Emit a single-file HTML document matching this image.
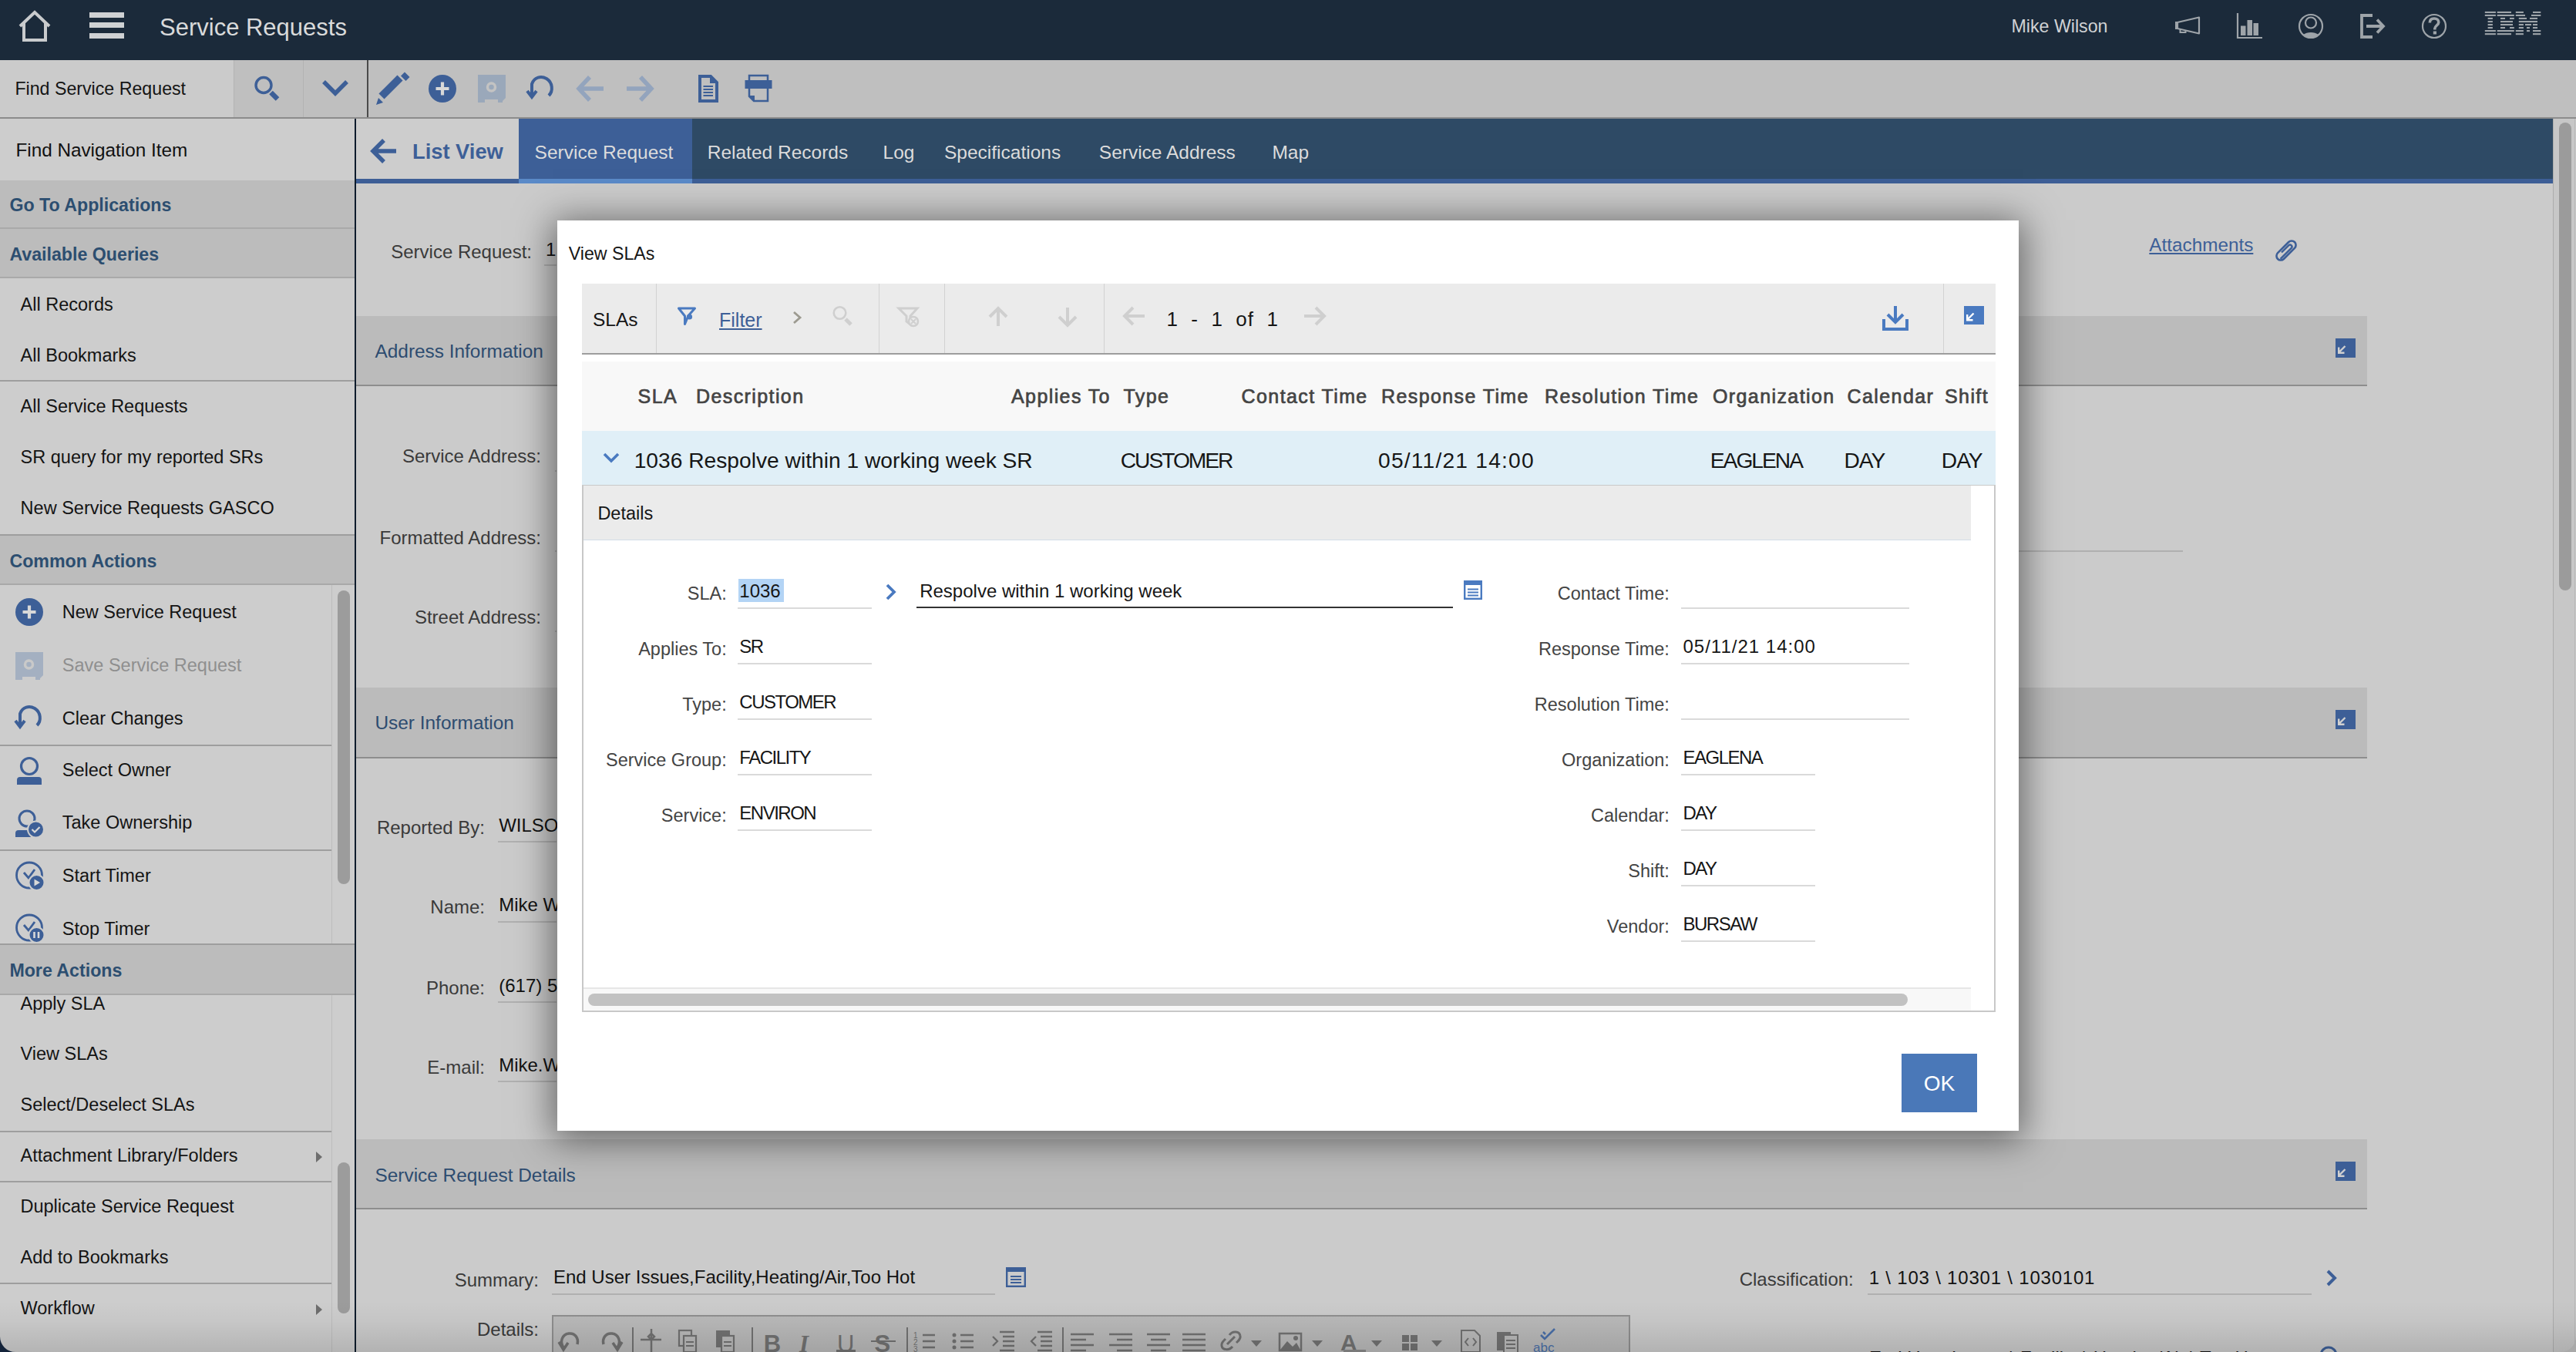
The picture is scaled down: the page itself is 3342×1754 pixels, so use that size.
<!DOCTYPE html>
<html><head><meta charset="utf-8"><title>Service Requests</title>
<style>
html,body{margin:0;padding:0;}
body{width:3342px;height:1754px;position:relative;overflow:hidden;background:#cbcbcb;font-family:"Liberation Sans",sans-serif;}
.r{position:absolute;display:block;}
.t{position:absolute;white-space:nowrap;line-height:1;}
svg.r{overflow:visible;}
</style></head><body>
<div class="r" style="left:0px;top:0px;width:3342px;height:78px;background:#1b2a3a;"></div>
<svg class="r" style="left:22px;top:12px;" width="46" height="44" viewBox="0 0 46 44"><path d="M4 22 L23 4 L42 22 M9 18 V40 H37 V18" fill="none" stroke="#c9cbcd" stroke-width="4" stroke-linejoin="miter"/></svg>
<div class="r" style="left:116px;top:15.5px;width:45px;height:7.0px;background:#cfd1d3;"></div>
<div class="r" style="left:116px;top:29px;width:45px;height:7px;background:#cfd1d3;"></div>
<div class="r" style="left:116px;top:43px;width:45px;height:7px;background:#cfd1d3;"></div>
<div class="t " style="top:20.4px;font-size:31px;color:#d9dadb;left:207.0px;letter-spacing:0px;">Service Requests</div>
<div class="t " style="top:23.4px;font-size:23.2px;color:#d0d2d4;left:2609.5px;">Mike Wilson</div>
<svg class="r" style="left:2820px;top:18px;" width="38" height="30" viewBox="0 0 38 30"><path d="M5 11 L33 4.5 V25.5 L5 19 Z" fill="none" stroke="#9ea4a9" stroke-width="2.2" stroke-linejoin="round"/><rect x="2" y="10" width="3.5" height="10" fill="#9ea4a9"/><path d="M8.5 20 V24 H15.5 V22" fill="none" stroke="#9ea4a9" stroke-width="2"/></svg>
<svg class="r" style="left:2900px;top:16px;" width="36" height="36" viewBox="0 0 36 36"><path d="M3 1 V33 H35" fill="none" stroke="#9ea4a9" stroke-width="2.2"/><rect x="7" y="17.5" width="6.5" height="12.5" fill="#9ea4a9"/><rect x="15.5" y="10" width="6.5" height="20" fill="#9ea4a9"/><rect x="23.5" y="14" width="6.5" height="16" fill="#9ea4a9"/></svg>
<svg class="r" style="left:2980px;top:16px;" width="36" height="36" viewBox="0 0 36 36"><defs><clipPath id="uc"><circle cx="18" cy="18" r="15"/></clipPath></defs><circle cx="18" cy="18" r="15" fill="none" stroke="#9ea4a9" stroke-width="2.2"/><circle cx="18" cy="13.5" r="7" fill="none" stroke="#9ea4a9" stroke-width="2.2"/><ellipse cx="18" cy="36" rx="14" ry="10" fill="#9ea4a9" clip-path="url(#uc)"/></svg>
<svg class="r" style="left:3060px;top:16px;" width="36" height="36" viewBox="0 0 36 36"><path d="M18 4 H4 V32 H18" fill="none" stroke="#9ea4a9" stroke-width="3.8"/><path d="M10 18 H32 M24 9.5 L32 18 L24 26.5" fill="none" stroke="#9ea4a9" stroke-width="3.8"/></svg>
<svg class="r" style="left:3140px;top:16px;" width="36" height="36" viewBox="0 0 36 36"><circle cx="18" cy="18" r="15" fill="none" stroke="#9ea4a9" stroke-width="2.2"/><path d="M12.3 13.5 C12.3 9.5 14.8 8 18 8 C21.5 8 23.8 10 23.8 13 C23.8 16.5 18.8 17.5 18.8 21 V22.5" fill="none" stroke="#9ea4a9" stroke-width="3.6"/><rect x="16.8" y="24.5" width="4.2" height="4" fill="#9ea4a9"/></svg>
<svg class="r" style="left:3222px;top:13px;" width="78" height="34" viewBox="0 0 78 34"><rect x="1.8" y="1.9" width="14.1" height="2.1" fill="#9ea4a9"/><rect x="17.7" y="1.9" width="18.3" height="2.1" fill="#9ea4a9"/><rect x="41.8" y="1.9" width="10.1" height="2.1" fill="#9ea4a9"/><rect x="64.0" y="1.9" width="10.3" height="2.1" fill="#9ea4a9"/><rect x="1.8" y="5.9" width="14.1" height="2.1" fill="#9ea4a9"/><rect x="17.7" y="5.9" width="22.1" height="2.1" fill="#9ea4a9"/><rect x="41.8" y="5.9" width="12.2" height="2.1" fill="#9ea4a9"/><rect x="62.0" y="5.9" width="12.3" height="2.1" fill="#9ea4a9"/><rect x="5.6" y="9.9" width="6.3" height="2.1" fill="#9ea4a9"/><rect x="22.0" y="9.9" width="6.0" height="2.1" fill="#9ea4a9"/><rect x="34.0" y="9.9" width="5.8" height="2.1" fill="#9ea4a9"/><rect x="45.8" y="9.9" width="10.2" height="2.1" fill="#9ea4a9"/><rect x="60.0" y="9.9" width="10.0" height="2.1" fill="#9ea4a9"/><rect x="5.6" y="14.0" width="6.3" height="2.1" fill="#9ea4a9"/><rect x="22.0" y="14.0" width="16.0" height="2.1" fill="#9ea4a9"/><rect x="45.8" y="14.0" width="24.2" height="2.1" fill="#9ea4a9"/><rect x="5.6" y="18.0" width="6.3" height="2.1" fill="#9ea4a9"/><rect x="22.0" y="18.0" width="16.0" height="2.1" fill="#9ea4a9"/><rect x="45.8" y="18.0" width="6.1" height="2.1" fill="#9ea4a9"/><rect x="54.0" y="18.0" width="8.0" height="2.1" fill="#9ea4a9"/><rect x="64.0" y="18.0" width="6.0" height="2.1" fill="#9ea4a9"/><rect x="5.6" y="22.0" width="6.3" height="2.1" fill="#9ea4a9"/><rect x="22.0" y="22.0" width="6.0" height="2.1" fill="#9ea4a9"/><rect x="34.0" y="22.0" width="5.8" height="2.1" fill="#9ea4a9"/><rect x="45.8" y="22.0" width="6.1" height="2.1" fill="#9ea4a9"/><rect x="56.0" y="22.0" width="4.0" height="2.1" fill="#9ea4a9"/><rect x="64.0" y="22.0" width="6.0" height="2.1" fill="#9ea4a9"/><rect x="1.8" y="26.0" width="14.1" height="2.1" fill="#9ea4a9"/><rect x="17.7" y="26.0" width="22.1" height="2.1" fill="#9ea4a9"/><rect x="41.8" y="26.0" width="10.1" height="2.1" fill="#9ea4a9"/><rect x="56.0" y="26.0" width="4.0" height="2.1" fill="#9ea4a9"/><rect x="64.0" y="26.0" width="10.3" height="2.1" fill="#9ea4a9"/><rect x="1.8" y="30.1" width="14.1" height="2.1" fill="#9ea4a9"/><rect x="17.7" y="30.1" width="18.3" height="2.1" fill="#9ea4a9"/><rect x="41.8" y="30.1" width="10.1" height="2.1" fill="#9ea4a9"/><rect x="64.0" y="30.1" width="10.3" height="2.1" fill="#9ea4a9"/></svg>
<div class="r" style="left:0px;top:78px;width:3342px;height:74px;background:#bfbfbf;"></div>
<div class="r" style="left:0px;top:78px;width:303px;height:74px;background:#cbcbcb;"></div>
<div class="r" style="left:303px;top:78px;width:1px;height:74px;background:#b3b3b3;"></div>
<div class="r" style="left:393px;top:78px;width:1px;height:74px;background:#b3b3b3;"></div>
<div class="r" style="left:476px;top:78px;width:2px;height:74px;background:#4a4a4a;"></div>
<div class="r" style="left:0px;top:152px;width:3342px;height:2px;background:#8c8c8c;"></div>
<div class="t " style="top:103.7px;font-size:23.2px;color:#141414;left:19.4px;">Find Service Request</div>
<svg class="r" style="left:325px;top:94px;" width="40" height="40" viewBox="0 0 40 40"><circle cx="17" cy="16.5" r="10" fill="none" stroke="#3d5f97" stroke-width="3.4"/><path d="M26.5 26 L35 34.5" stroke="#3d5f97" stroke-width="6.5"/></svg>
<svg class="r" style="left:417px;top:102px;" width="36" height="26" viewBox="0 0 36 26"><path d="M3 4 L18 19 L33 4" fill="none" stroke="#3d5f97" stroke-width="5.5"/></svg>
<svg class="r" style="left:486px;top:92px;" width="48" height="46" viewBox="0 0 48 46"><path d="M9 33 L33 9" stroke="#3d5f97" stroke-width="10"/><path d="M36.5 4 L43 10.5" stroke="#3d5f97" stroke-width="7"/><path d="M2 44 L5 35 L11 41 Z" fill="#3d5f97"/></svg>
<svg class="r" style="left:555px;top:96px;" width="38" height="38" viewBox="0 0 38 38"><circle cx="19" cy="19" r="18" fill="#3d5f97"/><path d="M19 10.5 V27.5 M10.5 19 H27.5" stroke="#d8d8d8" stroke-width="4.2"/></svg>
<svg class="r" style="left:619px;top:96px;" width="38" height="38" viewBox="0 0 38 38"><path d="M1 1 H37 V31 L33 35 V37 H27 V33 H10 V37 H1 Z" fill="#9aa8ba"/><circle cx="18.5" cy="17" r="5" fill="none" stroke="#c3c3c3" stroke-width="3.5"/></svg>
<svg class="r" style="left:682px;top:97px;" width="40" height="36" viewBox="0 0 40 36"><path d="M30 27 C36 21 35 10 27 5 C20 1 11 3 8 12 V26" fill="none" stroke="#3d5f97" stroke-width="4"/><path d="M2 21 L8 29 L14 21" fill="none" stroke="#3d5f97" stroke-width="4"/></svg>
<svg class="r" style="left:746px;top:95px;" width="40" height="40" viewBox="0 0 40 40"><path d="M6 20 H37 M19 5 L5 20 L19 35" fill="none" stroke="#93a4bd" stroke-width="5.5"/></svg>
<svg class="r" style="left:810px;top:95px;" width="40" height="40" viewBox="0 0 40 40"><path d="M3 20 H34 M21 5 L35 20 L21 35" fill="none" stroke="#93a4bd" stroke-width="5.5"/></svg>
<svg class="r" style="left:904px;top:95px;" width="30" height="40" viewBox="0 0 30 40"><path d="M4 4 H18 L26 12 V36 H4 Z" fill="none" stroke="#3d5f97" stroke-width="4"/><path d="M17 2 V13 H28 Z" fill="#3d5f97"/><path d="M8.5 17 H21 M8.5 21 H21 M8.5 25 H21 M8.5 29 H21" stroke="#3d5f97" stroke-width="2"/></svg>
<svg class="r" style="left:964px;top:95px;" width="40" height="40" viewBox="0 0 40 40"><rect x="2.5" y="9" width="35" height="11" fill="#3d5f97"/><path d="M8 14 V3 H32 V14" fill="none" stroke="#3d5f97" stroke-width="2.5"/><path d="M8 20 V30 L14 36 H32 V20" fill="none" stroke="#3d5f97" stroke-width="2.5"/><path d="M8 29 H15 V36 Z" fill="#3d5f97"/></svg>
<div class="r" style="left:0px;top:154px;width:460px;height:1600px;background:#cdcdcd;"></div>
<div class="r" style="left:460px;top:154px;width:2px;height:1600px;background:#0e1c2c;"></div>
<div class="t " style="top:182.8px;font-size:24.3px;color:#111111;left:20.4px;font-weight:500;">Find Navigation Item</div>
<div class="r" style="left:0px;top:234px;width:460px;height:63px;background:#bcbcbc;"></div>
<div class="r" style="left:0px;top:295px;width:460px;height:2px;background:#a9a9a9;"></div>
<div class="t " style="top:255.1px;font-size:23.2px;color:#2c4e70;font-weight:bold;left:12.4px;">Go To Applications</div>
<div class="r" style="left:0px;top:297px;width:460px;height:64px;background:#bcbcbc;"></div>
<div class="r" style="left:0px;top:359px;width:460px;height:2px;background:#a9a9a9;"></div>
<div class="t " style="top:318.7px;font-size:23.2px;color:#2c4e70;font-weight:bold;left:12.4px;">Available Queries</div>
<div class="t " style="top:383.9px;font-size:23.5px;color:#141414;left:26.6px;">All Records</div>
<div class="t " style="top:450.1px;font-size:23.5px;color:#141414;left:26.6px;">All Bookmarks</div>
<div class="t " style="top:516.1px;font-size:23.5px;color:#141414;left:26.6px;">All Service Requests</div>
<div class="t " style="top:582.1px;font-size:23.5px;color:#141414;left:26.6px;">SR query for my reported SRs</div>
<div class="t " style="top:647.6px;font-size:23.5px;color:#141414;left:26.6px;">New Service Requests GASCO</div>
<div class="r" style="left:0px;top:493px;width:460px;height:2px;background:#9e9e9e;"></div>
<div class="r" style="left:0px;top:693px;width:460px;height:2px;background:#9e9e9e;"></div>
<div class="r" style="left:0px;top:695px;width:460px;height:64px;background:#bcbcbc;"></div>
<div class="r" style="left:0px;top:757px;width:460px;height:2px;background:#a9a9a9;"></div>
<div class="t " style="top:717.0px;font-size:23.2px;color:#2c4e70;font-weight:bold;left:12.4px;">Common Actions</div>
<div class="t " style="top:783.1px;font-size:23.5px;color:#141414;left:80.8px;">New Service Request</div>
<div class="t " style="top:852.1px;font-size:23.5px;color:#8f8f8f;left:80.8px;">Save Service Request</div>
<div class="t " style="top:921.1px;font-size:23.5px;color:#141414;left:80.8px;">Clear Changes</div>
<div class="t " style="top:988.1px;font-size:23.5px;color:#141414;left:80.8px;">Select Owner</div>
<div class="t " style="top:1056.1px;font-size:23.5px;color:#141414;left:80.8px;">Take Ownership</div>
<div class="t " style="top:1125.1px;font-size:23.5px;color:#141414;left:80.8px;">Start Timer</div>
<div class="t " style="top:1194.1px;font-size:23.5px;color:#141414;left:80.8px;">Stop Timer</div>
<div class="r" style="left:0px;top:966px;width:430px;height:2px;background:#9e9e9e;"></div>
<div class="r" style="left:0px;top:1102px;width:430px;height:2px;background:#9e9e9e;"></div>
<div class="r" style="left:430px;top:759px;width:1px;height:466px;background:#bdbdbd;"></div>
<div class="r" style="left:438px;top:766px;width:16px;height:381px;background:#9c9c9c;border-radius:8px;"></div>
<svg class="r" style="left:19px;top:775px;" width="38" height="38" viewBox="0 0 38 38"><circle cx="19" cy="19" r="18" fill="#3d5f97"/><path d="M19 10.5 V27.5 M10.5 19 H27.5" stroke="#d8d8d8" stroke-width="4.2"/></svg>
<svg class="r" style="left:19px;top:845px;" width="38" height="38" viewBox="0 0 38 38"><path d="M1 1 H37 V31 L33 35 V37 H27 V33 H10 V37 H1 Z" fill="#a4b0c1"/><circle cx="18.5" cy="17" r="5" fill="none" stroke="#c9c9c9" stroke-width="3.5"/></svg>
<svg class="r" style="left:18px;top:914px;" width="40" height="36" viewBox="0 0 40 36"><path d="M30 27 C36 21 35 10 27 5 C20 1 11 3 8 12 V26" fill="none" stroke="#3d5f97" stroke-width="4"/><path d="M2 21 L8 29 L14 21" fill="none" stroke="#3d5f97" stroke-width="4"/></svg>
<svg class="r" style="left:20px;top:980px;" width="36" height="40" viewBox="0 0 36 40"><circle cx="18" cy="14" r="10.5" fill="none" stroke="#3d5f97" stroke-width="3.2"/><path d="M2 38 V32 Q2 28 6 28 H30 Q34 28 34 32 V38 Z" fill="#3d5f97"/></svg>
<svg class="r" style="left:18px;top:1048px;" width="40" height="42" viewBox="0 0 40 42"><circle cx="17" cy="14" r="10" fill="none" stroke="#3d5f97" stroke-width="3"/><path d="M2 38 V33 Q2 29 6 29 H22 V38 Z" fill="#3d5f97"/><circle cx="28.5" cy="28" r="10.5" fill="#3d5f97" stroke="#cdcdcd" stroke-width="2"/><path d="M23.5 28 L27 31.5 L33.5 25" fill="none" stroke="#d8d8d8" stroke-width="2.2"/></svg>
<svg class="r" style="left:18px;top:1116px;" width="40" height="42" viewBox="0 0 40 42"><circle cx="20" cy="19.5" r="16.5" fill="none" stroke="#3d5f97" stroke-width="2.8"/><path d="M13 16 L19 23 L27 12" fill="none" stroke="#3d5f97" stroke-width="2.8"/><circle cx="29.5" cy="29" r="10" fill="#3d5f97" stroke="#cdcdcd" stroke-width="2"/><path d="M26.5 24.5 L34 29 L26.5 33.5 Z" fill="#d8d8d8"/></svg>
<svg class="r" style="left:18px;top:1184px;" width="40" height="42" viewBox="0 0 40 42"><circle cx="20" cy="19.5" r="16.5" fill="none" stroke="#3d5f97" stroke-width="2.8"/><path d="M13 16 L19 23 L27 12" fill="none" stroke="#3d5f97" stroke-width="2.8"/><circle cx="29.5" cy="29" r="10" fill="#3d5f97" stroke="#cdcdcd" stroke-width="2"/><path d="M26.5 25 V33 M32 25 V33" stroke="#d8d8d8" stroke-width="2.6"/></svg>
<div class="r" style="left:0px;top:1224px;width:460px;height:2px;background:#9e9e9e;"></div>
<div class="r" style="left:0px;top:1226px;width:460px;height:65px;background:#bcbcbc;"></div>
<div class="r" style="left:0px;top:1289px;width:460px;height:2px;background:#a9a9a9;"></div>
<div class="t " style="top:1248.4px;font-size:23.2px;color:#2c4e70;font-weight:bold;left:12.4px;">More Actions</div>
<div class="t " style="top:1291.1px;font-size:23.5px;color:#141414;left:26.5px;">Apply SLA</div>
<div class="t " style="top:1356.1px;font-size:23.5px;color:#141414;left:26.5px;">View SLAs</div>
<div class="t " style="top:1422.1px;font-size:23.5px;color:#141414;left:26.5px;">Select/Deselect SLAs</div>
<div class="t " style="top:1488.1px;font-size:23.5px;color:#141414;left:26.5px;">Attachment Library/Folders</div>
<div class="t " style="top:1553.6px;font-size:23.5px;color:#141414;left:26.5px;">Duplicate Service Request</div>
<div class="t " style="top:1619.5px;font-size:23.5px;color:#141414;left:26.5px;">Add to Bookmarks</div>
<div class="t " style="top:1685.9px;font-size:23.5px;color:#141414;left:26.5px;">Workflow</div>
<div class="r" style="left:0px;top:1467px;width:430px;height:2px;background:#9e9e9e;"></div>
<div class="r" style="left:0px;top:1532px;width:430px;height:2px;background:#9e9e9e;"></div>
<div class="r" style="left:0px;top:1664px;width:430px;height:2px;background:#9e9e9e;"></div>
<div class="r" style="left:430px;top:1291px;width:1px;height:463px;background:#bdbdbd;"></div>
<div class="r" style="left:438px;top:1508px;width:16px;height:196px;background:#9c9c9c;border-radius:8px;"></div>
<svg class="r" style="left:407px;top:1492px;" width="14" height="18" viewBox="0 0 14 18"><path d="M3 2 L11 9 L3 16 Z" fill="#6e6e6e"/></svg>
<svg class="r" style="left:407px;top:1690px;" width="14" height="18" viewBox="0 0 14 18"><path d="M3 2 L11 9 L3 16 Z" fill="#6e6e6e"/></svg>
<div class="r" style="left:0px;top:1226px;width:460px;height:65px;background:#bcbcbc;"></div>
<div class="r" style="left:0px;top:1289px;width:460px;height:2px;background:#a9a9a9;"></div>
<div class="t " style="top:1248.4px;font-size:23.2px;color:#2c4e70;font-weight:bold;left:12.4px;">More Actions</div>
<div class="r" style="left:462px;top:154px;width:2850px;height:78px;background:#2e4a65;"></div>
<div class="r" style="left:462px;top:232px;width:2850px;height:6px;background:#3d5e96;"></div>
<div class="r" style="left:462px;top:154px;width:211px;height:78px;background:#cdcdcd;"></div>
<div class="r" style="left:673px;top:154px;width:225px;height:78px;background:#3d5f97;"></div>
<div class="r" style="left:673px;top:232px;width:225px;height:6px;background:#5a8ac8;"></div>
<svg class="r" style="left:480px;top:178px;" width="36" height="36" viewBox="0 0 36 36"><path d="M5 18 H34 M18 4 L4 18 L18 32" fill="none" stroke="#3d5f97" stroke-width="5.5"/></svg>
<div class="t " style="top:183.2px;font-size:27.3px;color:#3d5f97;font-weight:bold;left:535.0px;">List View</div>
<div class="t " style="top:185.6px;font-size:24.5px;color:#dcdcdc;left:693.6px;">Service Request</div>
<div class="t " style="top:185.6px;font-size:24.5px;color:#dcdcdc;left:917.7px;">Related Records</div>
<div class="t " style="top:185.6px;font-size:24.5px;color:#dcdcdc;left:1145.5px;">Log</div>
<div class="t " style="top:185.6px;font-size:24.5px;color:#dcdcdc;left:1225.0px;">Specifications</div>
<div class="t " style="top:185.6px;font-size:24.5px;color:#dcdcdc;left:1425.8px;">Service Address</div>
<div class="t " style="top:185.6px;font-size:24.5px;color:#dcdcdc;left:1650.4px;">Map</div>
<div class="r" style="left:462px;top:238px;width:2850px;height:1516px;background:#cbcbcb;"></div>
<div class="r" style="left:3312px;top:154px;width:30px;height:1600px;background:#c7c7c7;"></div>
<div class="r" style="left:3312px;top:154px;width:1px;height:1600px;background:#adadad;"></div>
<div class="r" style="left:3340px;top:154px;width:1px;height:1600px;background:#b8b8b8;"></div>
<div class="r" style="left:3320px;top:159px;width:16px;height:607px;background:#9b9b9b;border-radius:8px;"></div>
<div class="t " style="top:315.3px;font-size:24px;color:#3a3a3a;right:2652.0px;text-align:right;">Service Request:</div>
<div class="t " style="top:312.2px;font-size:24px;color:#121212;left:708.0px;">1</div>
<div class="r" style="left:706px;top:343px;width:16px;height:2px;background:#b0b0b0;"></div>
<div class="t " style="top:306.4px;font-size:24.3px;color:#3d5f97;left:2788.3px;"><u>Attachments</u></div>
<svg class="r" style="left:2949px;top:308px;" width="34" height="34" viewBox="0 0 34 34"><g transform="rotate(45 17 17)"><rect x="11.5" y="1.5" width="11" height="31" rx="5.5" fill="none" stroke="#3d5f97" stroke-width="2.6"/><path d="M14.5 23 V10 A2.5 2.5 0 0 1 19.5 10 V30" fill="none" stroke="#3d5f97" stroke-width="2.4"/></g></svg>
<div class="r" style="left:462px;top:410px;width:2609px;height:91px;background:#bbbbbb;"></div>
<div class="r" style="left:462px;top:499px;width:2609px;height:2px;background:#8d8d8d;"></div>
<div class="t " style="top:444.3px;font-size:24.4px;color:#2d4c70;left:486.5px;">Address Information</div>
<svg class="r" style="left:3030px;top:438.5px;" width="26" height="25" viewBox="0 0 26 25"><rect width="26" height="25" fill="#3d5f97"/><path d="M12.5 10 L5 17.5 M4.2 11.5 V18.8 H11.5" fill="none" stroke="#d0d0d0" stroke-width="2.4"/></svg>
<div class="t " style="top:580.3px;font-size:24px;color:#3a3a3a;right:2640.0px;text-align:right;">Service Address:</div>
<div class="r" style="left:720px;top:610px;width:2px;height:2px;background:#b0b0b0;"></div>
<div class="t " style="top:685.5px;font-size:24px;color:#3a3a3a;right:2640.0px;text-align:right;">Formatted Address:</div>
<div class="r" style="left:2619px;top:714px;width:213px;height:2px;background:#b0b0b0;"></div>
<div class="r" style="left:720px;top:714px;width:2px;height:2px;background:#b0b0b0;"></div>
<div class="t " style="top:788.9px;font-size:24px;color:#3a3a3a;right:2640.0px;text-align:right;">Street Address:</div>
<div class="r" style="left:720px;top:818px;width:2px;height:2px;background:#b0b0b0;"></div>
<div class="r" style="left:462px;top:892px;width:2609px;height:92px;background:#bbbbbb;"></div>
<div class="r" style="left:462px;top:982px;width:2609px;height:2px;background:#8d8d8d;"></div>
<div class="t " style="top:926.1px;font-size:24.4px;color:#2d4c70;left:486.5px;">User Information</div>
<svg class="r" style="left:3030px;top:920.5px;" width="26" height="25" viewBox="0 0 26 25"><rect width="26" height="25" fill="#3d5f97"/><path d="M12.5 10 L5 17.5 M4.2 11.5 V18.8 H11.5" fill="none" stroke="#d0d0d0" stroke-width="2.4"/></svg>
<div class="t " style="top:1061.7px;font-size:24px;color:#3a3a3a;right:2713.0px;text-align:right;">Reported By:</div>
<div class="t " style="top:1058.7px;font-size:24px;color:#121212;left:647.2px;">WILSO</div>
<div class="r" style="left:646px;top:1091px;width:76px;height:2px;background:#b0b0b0;"></div>
<div class="t " style="top:1165.3px;font-size:24px;color:#3a3a3a;right:2713.0px;text-align:right;">Name:</div>
<div class="t " style="top:1162.3px;font-size:24px;color:#121212;left:647.2px;">Mike W</div>
<div class="r" style="left:646px;top:1194.6px;width:76px;height:2.0px;background:#b0b0b0;"></div>
<div class="t " style="top:1269.7px;font-size:24px;color:#3a3a3a;right:2713.0px;text-align:right;">Phone:</div>
<div class="t " style="top:1266.7px;font-size:24px;color:#121212;left:647.2px;">(617) 5</div>
<div class="r" style="left:646px;top:1299px;width:76px;height:2px;background:#b0b0b0;"></div>
<div class="t " style="top:1372.7px;font-size:24px;color:#3a3a3a;right:2713.0px;text-align:right;">E-mail:</div>
<div class="t " style="top:1369.7px;font-size:24px;color:#121212;left:647.2px;">Mike.W</div>
<div class="r" style="left:646px;top:1402px;width:76px;height:2px;background:#b0b0b0;"></div>
<div class="r" style="left:462px;top:1478px;width:2609px;height:91px;background:#bbbbbb;"></div>
<div class="r" style="left:462px;top:1567px;width:2609px;height:2px;background:#8d8d8d;"></div>
<div class="t " style="top:1512.7px;font-size:24.4px;color:#2d4c70;left:486.5px;">Service Request Details</div>
<svg class="r" style="left:3030px;top:1506.5px;" width="26" height="25" viewBox="0 0 26 25"><rect width="26" height="25" fill="#3d5f97"/><path d="M12.5 10 L5 17.5 M4.2 11.5 V18.8 H11.5" fill="none" stroke="#d0d0d0" stroke-width="2.4"/></svg>
<div class="t " style="top:1648.7px;font-size:24px;color:#3a3a3a;right:2643.0px;text-align:right;">Summary:</div>
<div class="t " style="top:1645.1px;font-size:24px;color:#121212;left:718.0px;">End User Issues,Facility,Heating/Air,Too Hot</div>
<div class="r" style="left:716px;top:1678px;width:575px;height:2px;background:#b0b0b0;"></div>
<svg class="r" style="left:1305px;top:1644px;" width="26" height="26" viewBox="0 0 26 26"><rect x="1.2" y="1.2" width="23.6" height="23.6" fill="none" stroke="#3d5f97" stroke-width="2.4"/><rect x="1" y="1" width="24" height="5" fill="#3d5f97"/><path d="M6 12 H20 M6 16 H20 M6 20 H20" stroke="#3d5f97" stroke-width="1.8"/></svg>
<div class="t " style="top:1712.7px;font-size:24px;color:#3a3a3a;right:2643.0px;text-align:right;">Details:</div>
<div class="t " style="top:1648.0px;font-size:24px;color:#3a3a3a;left:2256.7px;">Classification:</div>
<div class="t " style="top:1645.7px;font-size:24px;color:#121212;left:2424.7px;letter-spacing:0.8px;">1 \ 103 \ 10301 \ 1030101</div>
<div class="r" style="left:2423px;top:1678px;width:576px;height:2px;background:#b0b0b0;"></div>
<svg class="r" style="left:3015px;top:1646px;" width="20" height="24" viewBox="0 0 20 24"><path d="M5 3 L14 12 L5 21" fill="none" stroke="#3d5f97" stroke-width="4"/></svg>
<div class="t " style="top:1749.7px;font-size:24px;color:#121212;left:2425.0px;">End User Issues \ Facility \ Heating/Air \ Too Hot</div>
<svg class="r" style="left:3008px;top:1745px;" width="26" height="12" viewBox="0 0 26 12"><circle cx="13" cy="13" r="10" fill="none" stroke="#3d5f97" stroke-width="3"/></svg>
<div class="r" style="left:716px;top:1706px;width:1399px;height:48px;background:#bababa;border:2px solid #8f8f8f;border-bottom:none;box-sizing:border-box;"></div>
<div class="r" style="left:820px;top:1722px;width:2px;height:32px;background:#727272;"></div>
<div class="r" style="left:975px;top:1722px;width:2px;height:32px;background:#727272;"></div>
<div class="r" style="left:1176px;top:1722px;width:2px;height:32px;background:#727272;"></div>
<div class="r" style="left:1378px;top:1722px;width:2px;height:32px;background:#727272;"></div>
<svg class="r" style="left:723px;top:1724px;" width="34" height="30" viewBox="0 0 34 30"><path d="M8 24 C3 17 6 7 15 6 C23 5 28 12 26 20" fill="none" stroke="#727272" stroke-width="3.5"/><path d="M2 17 L8 27 L14 18" fill="none" stroke="#727272" stroke-width="3.5"/></svg>
<svg class="r" style="left:775px;top:1724px;" width="34" height="30" viewBox="0 0 34 30"><path d="M26 24 C31 17 28 7 19 6 C11 5 6 12 8 20" fill="none" stroke="#727272" stroke-width="3.5"/><path d="M32 17 L26 27 L20 18" fill="none" stroke="#727272" stroke-width="3.5"/></svg>
<svg class="r" style="left:828px;top:1724px;" width="34" height="30" viewBox="0 0 34 30"><path d="M17 0 V30 M3 14 H30 M17 6 L13 10 L17 14 L21 10 Z" fill="none" stroke="#727272" stroke-width="2.5"/></svg>
<svg class="r" style="left:875px;top:1724px;" width="34" height="30" viewBox="0 0 34 30"><rect x="6" y="2" width="16" height="20" fill="none" stroke="#727272" stroke-width="2.2"/><rect x="12" y="9" width="16" height="21" fill="#bababa" stroke="#727272" stroke-width="2.2"/><path d="M15 17 H25 M15 22 H25" stroke="#727272" stroke-width="2"/></svg>
<svg class="r" style="left:924px;top:1724px;" width="34" height="30" viewBox="0 0 34 30"><rect x="5" y="2" width="18" height="22" fill="#727272"/><rect x="12" y="9" width="16" height="21" fill="#bababa" stroke="#727272" stroke-width="2.2"/><path d="M15 17 H25 M15 22 H25" stroke="#727272" stroke-width="2"/></svg>
<div class="t " style="top:1727.8px;font-size:31px;color:#727272;left:990.7px;font-weight:bold;">B</div>
<div class="t " style="top:1727.8px;font-size:31px;color:#727272;left:1037.0px;font-style:italic;font-family:Liberation Serif;font-weight:bold;">I</div>
<div class="t " style="top:1727.8px;font-size:31px;color:#727272;left:1086.0px;">U</div>
<div class="t " style="top:1727.8px;font-size:31px;color:#727272;left:1134.5px;font-weight:bold;">S</div>
<div class="r" style="left:1085px;top:1751px;width:25px;height:3px;background:#727272;"></div>
<div class="r" style="left:1130px;top:1739px;width:32px;height:2px;background:#727272;"></div>
<svg class="r" style="left:1183px;top:1724px;" width="34" height="30" viewBox="0 0 34 30"><path d="M14 8 H30 M14 16 H30 M14 24 H30" stroke="#727272" stroke-width="2.5"/><text x="2" y="12" font-size="10" fill="#727272" font-family="Liberation Sans">1</text><text x="2" y="21" font-size="10" fill="#727272" font-family="Liberation Sans">2</text><text x="2" y="30" font-size="10" fill="#727272" font-family="Liberation Sans">3</text></svg>
<svg class="r" style="left:1233px;top:1724px;" width="34" height="30" viewBox="0 0 34 30"><path d="M13 8 H30 M13 16 H30 M13 24 H30" stroke="#727272" stroke-width="2.5"/><circle cx="5" cy="8" r="2.5" fill="#727272"/><circle cx="5" cy="16" r="2.5" fill="#727272"/><circle cx="5" cy="24" r="2.5" fill="#727272"/></svg>
<svg class="r" style="left:1285px;top:1724px;" width="34" height="30" viewBox="0 0 34 30"><path d="M12 4 H31 M16 10 H31 M16 16 H31 M16 22 H31 M12 28 H31 M3 10 L9 16 L3 22" fill="none" stroke="#727272" stroke-width="2.3"/></svg>
<svg class="r" style="left:1334px;top:1724px;" width="34" height="30" viewBox="0 0 34 30"><path d="M12 4 H31 M16 10 H31 M16 16 H31 M16 22 H31 M12 28 H31 M10 10 L4 16 L10 22" fill="none" stroke="#727272" stroke-width="2.3"/></svg>
<svg class="r" style="left:1387px;top:1724px;" width="34" height="30" viewBox="0 0 34 30"><path d="M2 7 H32 M2 14 H22 M2 21 H32 M2 28 H22" stroke="#727272" stroke-width="2.3"/></svg>
<svg class="r" style="left:1437px;top:1724px;" width="34" height="30" viewBox="0 0 34 30"><path d="M2 7 H32 M12 14 H32 M2 21 H32 M12 28 H32" stroke="#727272" stroke-width="2.3"/></svg>
<svg class="r" style="left:1486px;top:1724px;" width="34" height="30" viewBox="0 0 34 30"><path d="M2 7 H32 M7 14 H27 M2 21 H32 M7 28 H27" stroke="#727272" stroke-width="2.3"/></svg>
<svg class="r" style="left:1532px;top:1724px;" width="34" height="30" viewBox="0 0 34 30"><path d="M2 7 H32 M2 14 H32 M2 21 H32 M2 28 H32" stroke="#727272" stroke-width="2.3"/></svg>
<svg class="r" style="left:1580px;top:1724px;" width="34" height="30" viewBox="0 0 34 30"><path d="M12 20 L22 10 M15 8 C19 2 28 3 29 9 C30 13 27 15 24 18 M19 23 C15 28 6 28 5 22 C4 18 7 16 10 13" fill="none" stroke="#727272" stroke-width="3"/></svg>
<svg class="r" style="left:1623px;top:1738px;" width="14" height="10" viewBox="0 0 14 10"><path d="M0 1 H14 L7 9 Z" fill="#727272"/></svg>
<svg class="r" style="left:1702px;top:1738px;" width="14" height="10" viewBox="0 0 14 10"><path d="M0 1 H14 L7 9 Z" fill="#727272"/></svg>
<svg class="r" style="left:1779px;top:1738px;" width="14" height="10" viewBox="0 0 14 10"><path d="M0 1 H14 L7 9 Z" fill="#727272"/></svg>
<svg class="r" style="left:1857px;top:1738px;" width="14" height="10" viewBox="0 0 14 10"><path d="M0 1 H14 L7 9 Z" fill="#727272"/></svg>
<svg class="r" style="left:1658px;top:1724px;" width="34" height="30" viewBox="0 0 34 30"><rect x="2" y="6" width="28" height="22" fill="none" stroke="#727272" stroke-width="2.5"/><path d="M3 27 L12 16 L19 23 L24 18 L29 27 Z" fill="#727272"/><circle cx="23" cy="12" r="3" fill="#727272"/></svg>
<div class="t " style="top:1726.6px;font-size:30px;color:#727272;font-weight:bold;left:1739.0px;">A</div>
<div class="r" style="left:1743px;top:1751px;width:29px;height:3px;background:#8a8a8a;"></div>
<svg class="r" style="left:1813px;top:1724px;" width="34" height="30" viewBox="0 0 34 30"><rect x="6" y="8" width="9" height="9" fill="#727272"/><rect x="17" y="8" width="9" height="9" fill="#727272"/><rect x="6" y="19" width="9" height="9" fill="#727272"/><rect x="17" y="19" width="9" height="9" fill="#727272"/></svg>
<svg class="r" style="left:1891px;top:1724px;" width="34" height="30" viewBox="0 0 34 30"><path d="M5 2 H22 L29 9 V30 H5 Z" fill="none" stroke="#727272" stroke-width="2"/><path d="M14 12 L10 17 L14 22 M20 12 L24 17 L20 22" fill="none" stroke="#727272" stroke-width="2"/></svg>
<svg class="r" style="left:1939px;top:1724px;" width="34" height="30" viewBox="0 0 34 30"><rect x="3" y="4" width="18" height="24" fill="#727272"/><rect x="12" y="8" width="18" height="24" fill="#bababa" stroke="#727272" stroke-width="2"/><path d="M15 15 H27 M15 20 H27 M15 25 H27" stroke="#727272" stroke-width="2"/></svg>
<svg class="r" style="left:1988px;top:1720px;" width="36" height="34" viewBox="0 0 36 34"><path d="M11 12 L16 17 L29 4 M14 8 L17 11" fill="none" stroke="#4a6fa8" stroke-width="2.6"/><text x="1" y="34" font-size="17" fill="#4a6fa8" font-family="Liberation Sans">abc</text></svg>
<div class="r" style="left:723px;top:286px;width:1896px;height:1181px;background:#ffffff;box-shadow:0 6px 45px 6px rgba(0,0,0,0.5);"></div>
<div class="t " style="top:318.4px;font-size:23.2px;color:#161616;left:737.7px;">View SLAs</div>
<div class="r" style="left:755px;top:368px;width:1834px;height:90px;background:#ebebeb;"></div>
<div class="r" style="left:755px;top:458px;width:1834px;height:2px;background:#9d9d9d;"></div>
<div class="r" style="left:851px;top:368px;width:1px;height:90px;background:#d2d2d2;"></div>
<div class="r" style="left:1140px;top:368px;width:1px;height:90px;background:#d2d2d2;"></div>
<div class="r" style="left:1225px;top:368px;width:1px;height:90px;background:#d2d2d2;"></div>
<div class="r" style="left:1432px;top:368px;width:1px;height:90px;background:#d2d2d2;"></div>
<div class="r" style="left:2521px;top:368px;width:1px;height:90px;background:#d2d2d2;"></div>
<div class="t " style="top:402.7px;font-size:24.5px;color:#161616;left:769.0px;">SLAs</div>
<svg class="r" style="left:878px;top:397px;" width="26" height="26" viewBox="0 0 26 26"><path d="M2.5 3 H23.5 L15 12.5 L10.5 23.5 V13 Z" fill="none" stroke="#4a7ac0" stroke-width="3" stroke-linejoin="round"/><circle cx="16.5" cy="14" r="3.6" fill="#4a7ac0"/></svg>
<div class="t " style="top:402.8px;font-size:25px;color:#3d5f97;left:933.0px;"><u>Filter</u></div>
<svg class="r" style="left:1026px;top:402px;" width="18" height="20" viewBox="0 0 18 20"><path d="M4 3 L12 10 L4 17" fill="none" stroke="#9c9a90" stroke-width="2.8"/></svg>
<svg class="r" style="left:1078px;top:395px;" width="30" height="30" viewBox="0 0 30 30"><circle cx="11.5" cy="11" r="7.8" fill="none" stroke="#cfcfcf" stroke-width="2.6"/><path d="M19 19 L26 26" stroke="#cfcfcf" stroke-width="5"/></svg>
<svg class="r" style="left:1164px;top:397px;" width="30" height="28" viewBox="0 0 30 28"><path d="M2 3 H26 L17 13 V24 L12 20 V13 Z" fill="none" stroke="#cfcfcf" stroke-width="3"/><circle cx="21" cy="20" r="6" fill="#ebebeb" stroke="#cfcfcf" stroke-width="2.5"/><path d="M18 17 L24 23 M24 17 L18 23" stroke="#cfcfcf" stroke-width="2"/></svg>
<svg class="r" style="left:1280px;top:397px;" width="30" height="28" viewBox="0 0 30 28"><path d="M15 26 V3 M4 14 L15 3 L26 14" fill="none" stroke="#cfcfcf" stroke-width="4"/></svg>
<svg class="r" style="left:1370px;top:397px;" width="30" height="28" viewBox="0 0 30 28"><path d="M15 2 V25 M4 14 L15 25 L26 14" fill="none" stroke="#cfcfcf" stroke-width="4"/></svg>
<svg class="r" style="left:1455px;top:396px;" width="32" height="28" viewBox="0 0 32 28"><path d="M4 14 H30 M15 3 L4 14 L15 25" fill="none" stroke="#cfcfcf" stroke-width="4"/></svg>
<svg class="r" style="left:1690px;top:396px;" width="32" height="28" viewBox="0 0 32 28"><path d="M2 14 H28 M17 3 L28 14 L17 25" fill="none" stroke="#cfcfcf" stroke-width="4"/></svg>
<div class="t " style="top:400.6px;font-size:26px;color:#161616;left:1513.4px;letter-spacing:1px;">1&nbsp; -&nbsp; 1&nbsp; of&nbsp; 1</div>
<svg class="r" style="left:2440px;top:394px;" width="38" height="38" viewBox="0 0 38 38"><path d="M19 3 V24 M9 14 L19 24 L29 14" fill="none" stroke="#4a7ac0" stroke-width="4"/><path d="M4 20 V33 H34 V20" fill="none" stroke="#4a7ac0" stroke-width="4"/></svg>
<svg class="r" style="left:2548px;top:397px;" width="26" height="24" viewBox="0 0 26 24"><rect width="26" height="24" fill="#4a7ac0"/><path d="M12.5 9.5 L5 17 M4.2 11 V18.3 H11.5" fill="none" stroke="#ffffff" stroke-width="2.4"/></svg>
<div class="r" style="left:755px;top:469px;width:1834px;height:90px;background:#f8f8f8;"></div>
<div class="t " style="top:502.3px;font-size:25px;color:#444444;left:827.6px;letter-spacing:1.4px;-webkit-text-stroke:0.7px #444444;">SLA</div>
<div class="t " style="top:502.3px;font-size:25px;color:#444444;left:903.0px;letter-spacing:1.4px;-webkit-text-stroke:0.7px #444444;">Description</div>
<div class="t " style="top:502.3px;font-size:25px;color:#444444;left:1312.0px;letter-spacing:1.4px;-webkit-text-stroke:0.7px #444444;">Applies To</div>
<div class="t " style="top:502.3px;font-size:25px;color:#444444;left:1457.5px;letter-spacing:1.4px;-webkit-text-stroke:0.7px #444444;">Type</div>
<div class="t " style="top:502.3px;font-size:25px;color:#444444;left:1610.6px;letter-spacing:1.4px;-webkit-text-stroke:0.7px #444444;">Contact Time</div>
<div class="t " style="top:502.3px;font-size:25px;color:#444444;left:1792.0px;letter-spacing:1.4px;-webkit-text-stroke:0.7px #444444;">Response Time</div>
<div class="t " style="top:502.3px;font-size:25px;color:#444444;left:2004.0px;letter-spacing:1.4px;-webkit-text-stroke:0.7px #444444;">Resolution Time</div>
<div class="t " style="top:502.3px;font-size:25px;color:#444444;left:2222.0px;letter-spacing:1.4px;-webkit-text-stroke:0.7px #444444;">Organization</div>
<div class="t " style="top:502.3px;font-size:25px;color:#444444;left:2396.6px;letter-spacing:1.4px;-webkit-text-stroke:0.7px #444444;">Calendar</div>
<div class="t " style="top:502.3px;font-size:25px;color:#444444;left:2523.0px;letter-spacing:1.4px;-webkit-text-stroke:0.7px #444444;">Shift</div>
<div class="r" style="left:755px;top:559px;width:1834px;height:70px;background:#e0eff7;"></div>
<div class="r" style="left:755px;top:629px;width:1834px;height:1px;background:#c9c9c9;"></div>
<svg class="r" style="left:781px;top:585px;" width="24" height="18" viewBox="0 0 24 18"><path d="M3 4 L12 13 L21 4" fill="none" stroke="#4a7ac0" stroke-width="3.6"/></svg>
<div class="t " style="top:583.1px;font-size:28.2px;color:#161616;left:822.7px;letter-spacing:0px;">1036 Respolve within 1 working week SR</div>
<div class="t " style="top:583.1px;font-size:28.2px;color:#161616;left:1453.7px;letter-spacing:-2px;">CUSTOMER</div>
<div class="t " style="top:583.1px;font-size:28.2px;color:#161616;left:1788.0px;letter-spacing:1.2px;">05/11/21 14:00</div>
<div class="t " style="top:583.1px;font-size:28.2px;color:#161616;left:2218.8px;letter-spacing:-2px;">EAGLENA</div>
<div class="t " style="top:583.1px;font-size:28.2px;color:#161616;left:2392.5px;letter-spacing:-1px;">DAY</div>
<div class="t " style="top:583.1px;font-size:28.2px;color:#161616;left:2518.8px;letter-spacing:-1px;">DAY</div>
<div class="r" style="left:755px;top:630px;width:2px;height:683px;background:#c8c8c8;"></div>
<div class="r" style="left:2587px;top:630px;width:2px;height:683px;background:#c8c8c8;"></div>
<div class="r" style="left:755px;top:1311px;width:1834px;height:2px;background:#c8c8c8;"></div>
<div class="r" style="left:757px;top:630px;width:1800px;height:70px;background:#ebebeb;"></div>
<div class="r" style="left:757px;top:700px;width:1800px;height:1px;background:#d3dde6;"></div>
<div class="t " style="top:655.1px;font-size:23.5px;color:#161616;left:775.4px;">Details</div>
<div class="r" style="left:958px;top:751px;width:59px;height:30px;background:#b3d4f5;"></div>
<div class="t " style="top:758.6px;font-size:23.5px;color:#444444;right:2399.3px;text-align:right;">SLA:</div>
<div class="t " style="top:755.2px;font-size:24px;color:#161616;left:959.3px;">1036</div>
<div class="r" style="left:957px;top:787.5px;width:174px;height:2.0px;background:#dadada;"></div>
<div class="t " style="top:830.6px;font-size:23.5px;color:#444444;right:2399.3px;text-align:right;">Applies To:</div>
<div class="t " style="top:827.2px;font-size:24px;color:#161616;left:959.3px;letter-spacing:-1.5px;">SR</div>
<div class="r" style="left:957px;top:859.5px;width:174px;height:2.0px;background:#dadada;"></div>
<div class="t " style="top:902.6px;font-size:23.5px;color:#444444;right:2399.3px;text-align:right;">Type:</div>
<div class="t " style="top:899.2px;font-size:24px;color:#161616;left:959.3px;letter-spacing:-1.5px;">CUSTOMER</div>
<div class="r" style="left:957px;top:931.5px;width:174px;height:2.0px;background:#dadada;"></div>
<div class="t " style="top:974.6px;font-size:23.5px;color:#444444;right:2399.3px;text-align:right;">Service Group:</div>
<div class="t " style="top:971.2px;font-size:24px;color:#161616;left:959.3px;letter-spacing:-1.5px;">FACILITY</div>
<div class="r" style="left:957px;top:1003.5px;width:174px;height:2.0px;background:#dadada;"></div>
<div class="t " style="top:1046.6px;font-size:23.5px;color:#444444;right:2399.3px;text-align:right;">Service:</div>
<div class="t " style="top:1043.2px;font-size:24px;color:#161616;left:959.3px;letter-spacing:-1.5px;">ENVIRON</div>
<div class="r" style="left:957px;top:1075.5px;width:174px;height:2.0px;background:#dadada;"></div>
<svg class="r" style="left:1146px;top:756px;" width="22" height="24" viewBox="0 0 22 24"><path d="M5 3 L14 12 L5 21" fill="none" stroke="#4a7ac0" stroke-width="3.8"/></svg>
<div class="t " style="top:754.7px;font-size:24px;color:#161616;left:1193.2px;">Respolve within 1 working week</div>
<div class="r" style="left:1189px;top:787px;width:696px;height:2px;background:#333333;"></div>
<svg class="r" style="left:1899px;top:753px;" width="24" height="25" viewBox="0 0 24 25"><rect x="1.2" y="1.2" width="21.6" height="22.6" fill="none" stroke="#4a7ac0" stroke-width="2.4"/><rect x="1" y="1" width="22" height="5" fill="#4a7ac0"/><path d="M5 11.5 H19 M5 15.5 H19 M5 19.5 H19" stroke="#4a7ac0" stroke-width="1.8"/></svg>
<div class="t " style="top:758.6px;font-size:23.5px;color:#444444;right:1176.2px;text-align:right;">Contact Time:</div>
<div class="r" style="left:2181px;top:787.5px;width:296px;height:2.0px;background:#dadada;"></div>
<div class="t " style="top:830.6px;font-size:23.5px;color:#444444;right:1176.2px;text-align:right;">Response Time:</div>
<div class="t " style="top:826.7px;font-size:24px;color:#161616;left:2183.5px;letter-spacing:1px;">05/11/21 14:00</div>
<div class="r" style="left:2181px;top:859.5px;width:296px;height:2.0px;background:#dadada;"></div>
<div class="t " style="top:902.6px;font-size:23.5px;color:#444444;right:1176.2px;text-align:right;">Resolution Time:</div>
<div class="r" style="left:2181px;top:931.5px;width:296px;height:2.0px;background:#dadada;"></div>
<div class="t " style="top:974.6px;font-size:23.5px;color:#444444;right:1176.2px;text-align:right;">Organization:</div>
<div class="t " style="top:970.7px;font-size:24px;color:#161616;left:2183.5px;letter-spacing:-1.5px;">EAGLENA</div>
<div class="r" style="left:2181px;top:1003.5px;width:174px;height:2.0px;background:#dadada;"></div>
<div class="t " style="top:1046.6px;font-size:23.5px;color:#444444;right:1176.2px;text-align:right;">Calendar:</div>
<div class="t " style="top:1042.7px;font-size:24px;color:#161616;left:2183.5px;letter-spacing:-1.5px;">DAY</div>
<div class="r" style="left:2181px;top:1075.5px;width:174px;height:2.0px;background:#dadada;"></div>
<div class="t " style="top:1118.6px;font-size:23.5px;color:#444444;right:1176.2px;text-align:right;">Shift:</div>
<div class="t " style="top:1114.7px;font-size:24px;color:#161616;left:2183.5px;letter-spacing:-1.5px;">DAY</div>
<div class="r" style="left:2181px;top:1147.5px;width:174px;height:2.0px;background:#dadada;"></div>
<div class="t " style="top:1190.6px;font-size:23.5px;color:#444444;right:1176.2px;text-align:right;">Vendor:</div>
<div class="t " style="top:1186.7px;font-size:24px;color:#161616;left:2183.5px;letter-spacing:-1.5px;">BURSAW</div>
<div class="r" style="left:2181px;top:1219.5px;width:174px;height:2.0px;background:#dadada;"></div>
<div class="r" style="left:757px;top:1281px;width:1800px;height:30px;background:#f8f8f8;"></div>
<div class="r" style="left:757px;top:1281px;width:1800px;height:2px;background:#e6e6e6;"></div>
<div class="r" style="left:763px;top:1289px;width:1712px;height:16px;background:#c2c2c2;border-radius:8px;"></div>
<div class="r" style="left:2467px;top:1367px;width:98px;height:76px;background:#4a78b8;"></div>
<div class="t " style="top:1391.5px;font-size:28px;color:#ffffff;left:2467.0px;width:98px;text-align:center;">OK</div>
<div class="r" style="left:0px;top:1688px;width:3342px;height:66px;background:linear-gradient(to bottom, rgba(0,0,0,0) 0%, rgba(0,0,0,0.03) 40%, rgba(0,0,0,0.12) 100%);"></div>
<svg class="r" style="left:0px;top:1734px;" width="20" height="20" viewBox="0 0 20 20"><path d="M0 0 A20 20 0 0 0 20 20 H0 Z" fill="#14233a"/></svg>
<svg class="r" style="left:3322px;top:1734px;" width="20" height="20" viewBox="0 0 20 20"><path d="M20 0 A20 20 0 0 1 0 20 H20 Z" fill="#a9a9a9"/></svg>
</body></html>
